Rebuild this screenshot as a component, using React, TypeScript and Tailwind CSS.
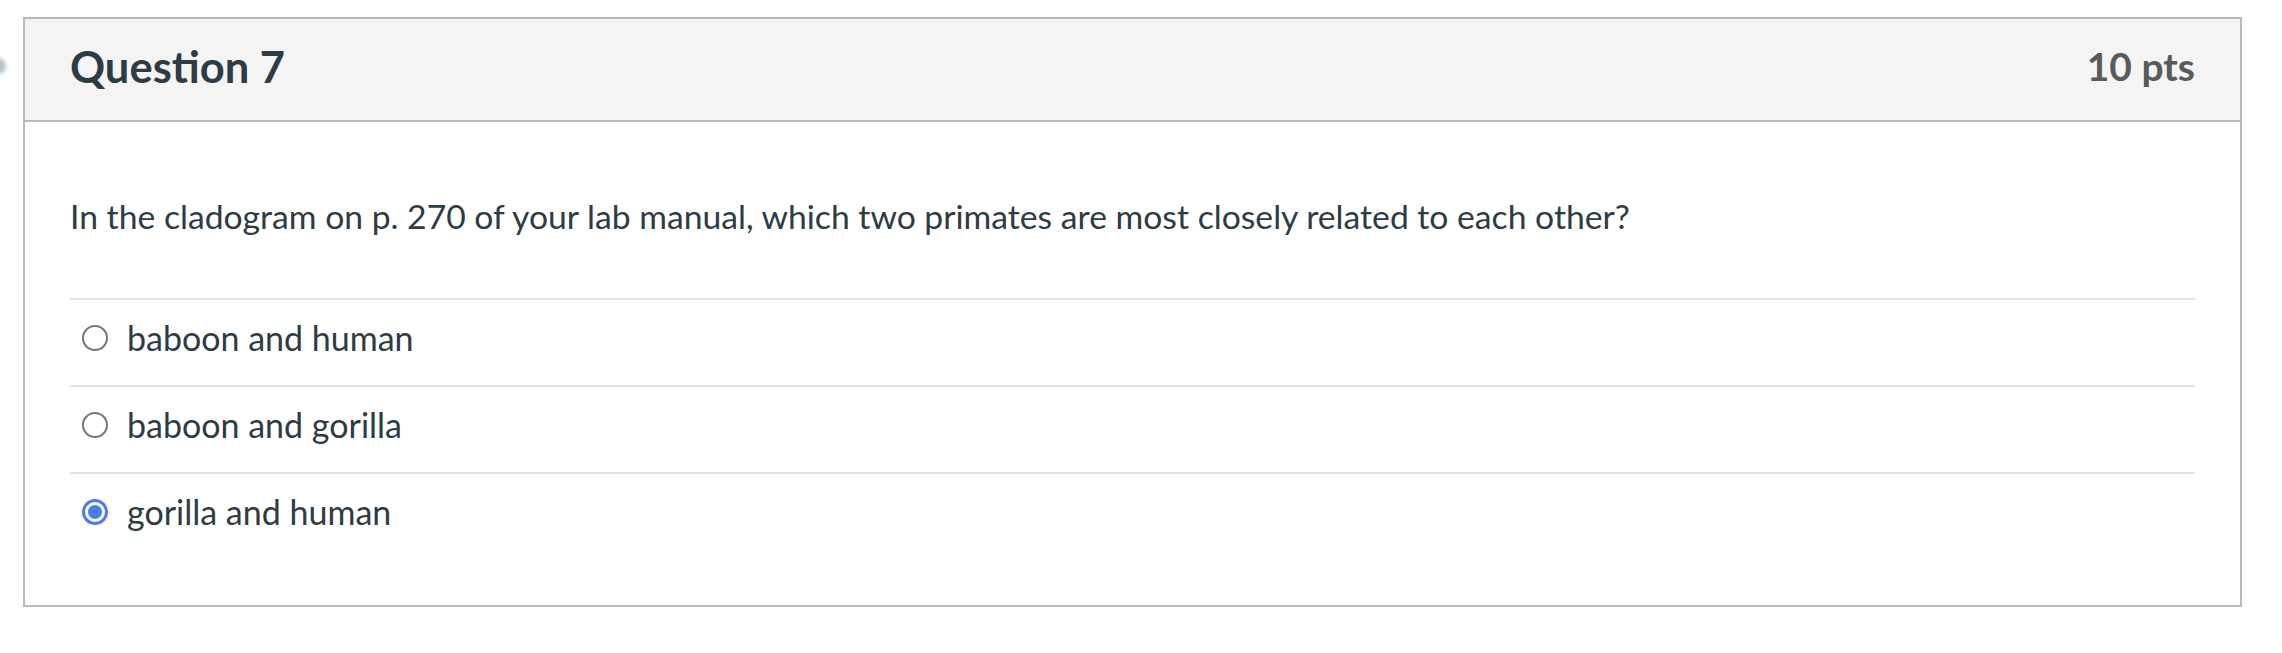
import React, { useState } from 'react';

const options = ['baboon and human', 'baboon and gorilla', 'gorilla and human'];

const Radio: React.FC<{ checked: boolean }> = ({ checked }) => (
    <span
        className={
            checked
                ? 'w-[26px] h-[26px] rounded-full border-[3px] border-[#4a7cf6] flex items-center justify-center shrink-0'
                : 'w-[26px] h-[26px] rounded-full border-2 border-[#767676] shrink-0'
        }
    >
        {checked && <span className="w-[14px] h-[14px] rounded-full bg-[#4a7cf6]" />}
    </span>
);

const App: React.FC = () => {
    const [selected, setSelected] = useState<number>(2);

    return (
        <div className="relative w-[2282px] h-[653px] bg-white pl-[23px] pt-[17px]" style={{ fontFamily: 'Lato, "Noto Sans", sans-serif' }}>
            {/* half-hidden dot on the left edge */}
            <div className="absolute left-[-10px] top-[58px] w-[16px] h-[16px] rounded-full bg-[#b4c0cc] blur-[2px]" />

            <div className="w-[2219px] border-2 border-[#b9b9b9]">
                <div className="h-[103px] bg-[#f4f4f4] border-b-2 border-[#b9b9b9] px-[45px] pb-[6px] flex items-center justify-between">
                    <h2 className="text-[43.5px] font-bold text-[#2d3b45] leading-none">Question 7</h2>
                    <span className="text-[39px] font-bold text-[#5a5a5a] leading-none">10 pts</span>
                </div>

                <div className="px-[45px] pt-[70px] pb-[46px]">
                    <p className="text-[33.7px] text-[#2d3b45] leading-[48px] mb-[58px]">
                        In the cladogram on p. 270 of your lab manual, which two primates are most closely related to each other?
                    </p>

                    {options.map((opt, i) => (
                        <label
                            key={opt}
                            onClick={() => setSelected(i)}
                            className="border-t-2 border-[#e3e3e3] h-[87px] pb-[10px] flex items-center gap-[19px] pl-[12px] cursor-pointer"
                        >
                            <Radio checked={selected === i} />
                            <span className="text-[34px] text-[#2d3b45] leading-none">{opt}</span>
                        </label>
                    ))}
                </div>
            </div>
        </div>
    );
};

export default App;
